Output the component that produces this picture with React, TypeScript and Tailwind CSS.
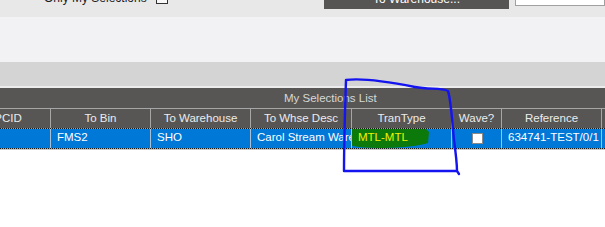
import React from 'react';

const columns = [
  { label: 'PCID', w: 'w-[85px]', value: '' },
  { label: 'To Bin', w: 'w-[100px]', value: 'FMS2' },
  { label: 'To Warehouse', w: 'w-[100px]', value: 'SHO' },
  { label: 'To Whse Desc', w: 'w-[101px]', value: 'Carol Stream Warehouse' },
  { label: 'TranType', w: 'w-[100px]', value: 'MTL-MTL' },
  { label: 'Wave?', w: 'w-[50px]', value: '' },
  { label: 'Reference', w: 'w-[100px]', value: '634741-TEST/0/1' },
  { label: 'Qty', w: 'w-[100px]', value: '' },
];

const dots = 'h-px bg-[repeating-linear-gradient(90deg,#1a1a1a_0_1px,#d89a48_1px_2px)]';

export default function App() {
  return (
    <div
      className="relative w-[605px] h-[227px] overflow-hidden bg-white text-[11.5px]"
      style={{ fontFamily: '"Liberation Sans", Arial, sans-serif' }}
    >
      {/* Top filter strip, scrolled partly out of view */}
      <div className="h-[17px] bg-[#e8e8e8] overflow-hidden">
        <div className="flex items-end h-[9px]">
          <span className="ml-[44px] mb-[4px] w-[112px] shrink-0 text-[12px] leading-[14px] text-[#1e1e1e] whitespace-nowrap">
            Only My Selections
          </span>
          <div className="mb-[5px] w-[12px] h-[12px] shrink-0 border border-[#333] bg-[#f8f8f8]" />
          <button className="ml-[156px] w-[185px] h-[24px] shrink-0 bg-[#575553] text-white text-[12px] leading-[14px] pt-[4px]">
            To Warehouse...
          </button>
          <div className="ml-[6px] mb-[3px] h-[20px] flex-1 border border-[#a0a0a0] bg-white" />
        </div>
      </div>

      {/* Empty panel */}
      <div className="h-[45px] bg-[#f2f2f4]" />

      {/* Toolbar band */}
      <div className="h-[24px] bg-[#d4d4d4]" />
      <div className="h-[2px] bg-[#ececec]" />

      {/* Grid */}
      <div className="h-[20px] bg-[#585654] text-[#d6d6d6] pl-[284px] leading-[20px] whitespace-nowrap">
        My Selections List
      </div>
      <div className="flex -ml-[34px] h-[20px] bg-[#585654] border-t border-[#a6a6a6] text-[#ececec]">
        {columns.map((c) => (
          <div
            key={c.label}
            className={`${c.w} shrink-0 border-r border-[#a6a6a6] text-center leading-[19px] whitespace-nowrap overflow-hidden`}
          >
            {c.label}
          </div>
        ))}
      </div>
      <div className={dots} />
      <div className="flex -ml-[34px] h-[19px] bg-[#0078d7] text-white">
        {columns.map((c) => (
          <div
            key={c.label}
            className={`${c.w} shrink-0 border-r border-[#a9bfd6] pl-[6px] leading-[17px] whitespace-nowrap overflow-hidden relative`}
          >
            {c.label === 'TranType' ? (
              <>
                <svg className="absolute -left-[4px] top-0" width="84" height="20" viewBox="0 0 84 20">
                  <path
                    d="M0 0 L78 0 L81 3 L80 14 C72 17 50 19 30 19 C18 19 8 18 1 16 Z"
                    fill="#0b7a0b"
                  />
                </svg>
                <span className="relative text-[#f2f200]">{c.value}</span>
              </>
            ) : c.label === 'Wave?' ? (
              <div className="mt-[4px] ml-[14px] w-[11px] h-[11px] bg-white border border-[#8a8a8a]" />
            ) : (
              c.value
            )}
          </div>
        ))}
      </div>
      <div className={dots} />
      <div className="h-px bg-[#c8c8c8]" />

      {/* Hand-drawn annotation */}
      <svg className="absolute inset-0 pointer-events-none" width="605" height="227" viewBox="0 0 605 227">
        <path
          d="M346 80 C360 78 390 82 415 87 C430 90 440 87 448 91 C451 100 452 120 454 140 C456 155 457 165 457 171 L459 174 M346 80 C345 110 344 140 344 171 L457 171"
          fill="none"
          stroke="#1414f0"
          strokeWidth="2.4"
          strokeLinecap="round"
          strokeLinejoin="round"
        />
      </svg>
    </div>
  );
}
